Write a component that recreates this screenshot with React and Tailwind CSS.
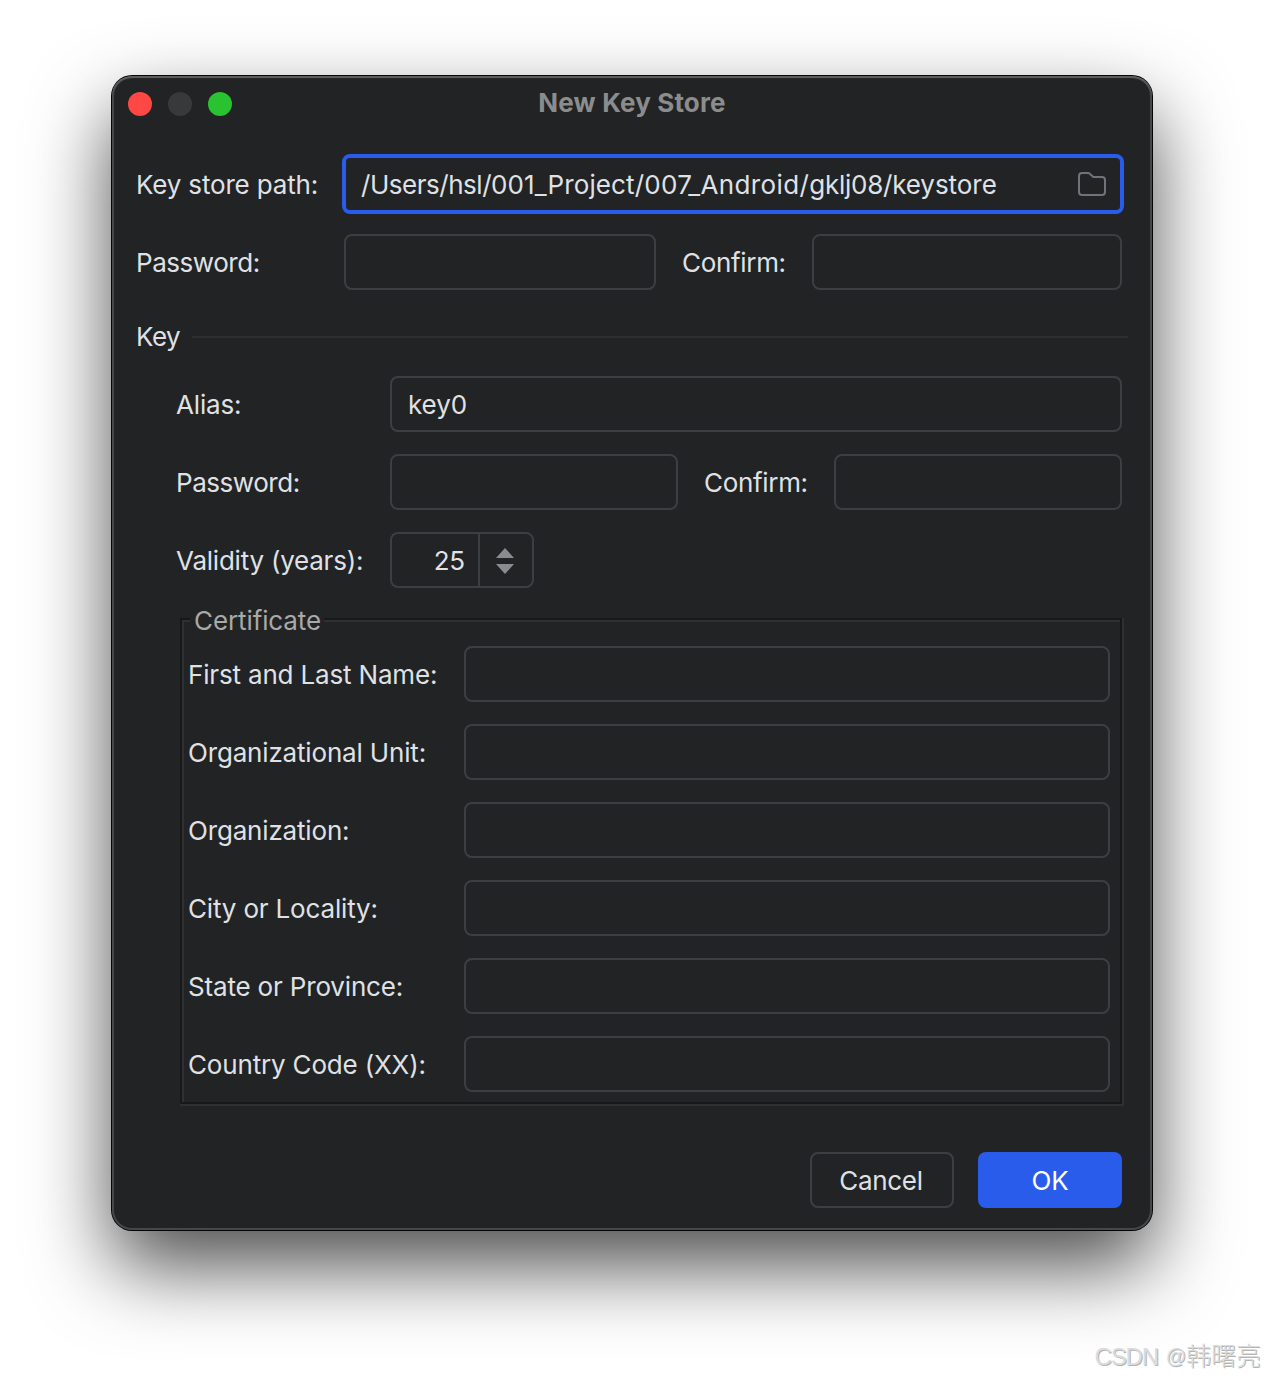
import React from "react";

const certificateFields = [
  "First and Last Name:",
  "Organizational Unit:",
  "Organization:",
  "City or Locality:",
  "State or Province:",
  "Country Code (XX):",
];

function Field({ className = "", children }) {
  return (
    <div
      className={
        "flex h-14 items-center rounded-lg border-2 border-[#3d3e44] px-4 " + className
      }
    >
      {children}
    </div>
  );
}

function FolderIcon() {
  return (
    <svg width="28" height="24" viewBox="0 0 28 24" fill="none" stroke="#6f737a" strokeWidth="2">
      <path d="M1 4a3 3 0 0 1 3-3h6.2a2 2 0 0 1 1.3.5L15.3 5H24a3 3 0 0 1 3 3v12a3 3 0 0 1-3 3H4a3 3 0 0 1-3-3z" />
    </svg>
  );
}

function TitleBar() {
  return (
    <div className="grid h-14 grid-cols-[1fr_auto_1fr] items-center px-4">
      <div className="flex gap-4">
        <span className="size-6 rounded-full bg-[#ff4744]" />
        <span className="size-6 rounded-full bg-[#38393a]" />
        <span className="size-6 rounded-full bg-[#29c231]" />
      </div>
      <div className="pb-0.5 text-[26px] font-bold tracking-[0.15px] text-[#8b8c8d]">
        New Key Store
      </div>
      <div />
    </div>
  );
}

function CertificateGroup() {
  return (
    <div className="relative ml-11 mr-[-2px] mt-[30px] h-[488px] p-0.5 shadow-[inset_-2px_0_#2f3032,inset_0_-2px_#2f3032,inset_2px_2px_#17181a]">
      <div className="flex h-full flex-col gap-[22px] pl-1.5 pr-3 pt-[26px] shadow-[inset_-2px_0_#17181a,inset_0_-2px_#17181a,inset_2px_2px_#2f3032]">
        {certificateFields.map((label) => (
          <div key={label} className="grid grid-cols-[276px_1fr] items-center">
            <span className="pt-0.5">{label}</span>
            <Field />
          </div>
        ))}
      </div>
      <div className="absolute left-2.5 top-[-13px] w-[134px] bg-[#222325] pl-1 leading-8 tracking-[-0.1px] text-[#a9a9a7]">
        Certificate
      </div>
    </div>
  );
}

export default function App() {
  return (
    <div className="relative h-[1378px] w-[1264px] overflow-hidden bg-white px-28 pt-19 font-['Inter',sans-serif] text-[26px] leading-8 font-[430] tracking-[-0.17px] text-[#dfe1e5]">
      <div className="h-[1154px] w-[1040px] rounded-[20px] bg-[#222325] shadow-[0_0_0_1px_#050505,inset_0_2px_1px_#5d5e5f,inset_0_0_0_2px_#464749,0_36px_80px_rgba(0,0,0,0.7)]">
        <TitleBar />
        <div className="px-6 pr-[30px] pt-[22px]">
          <div className="mr-[-2px] flex items-center">
            <span className="w-[206px] shrink-0 whitespace-nowrap pt-0.5">Key store path:</span>
            <div className="flex h-[60px] flex-1 items-center justify-between rounded-lg border-4 border-[#2a5cec] pl-[15px] pr-3.5">
              <span className="whitespace-nowrap pt-0.5">
                <span className="tracking-[-0.47px]">/Users/hsl/</span>
                <span className="tracking-[0.1px]">001_Project/</span>
                <span className="tracking-[0.38px]">007_Android/</span>
                <span className="tracking-[-0.25px]">gklj08/</span>
                <span className="tracking-[-0.05px]">keystore</span>
              </span>
              <FolderIcon />
            </div>
          </div>

          <div className="mt-5 grid grid-cols-[208px_312px_156px_310px] items-center">
            <span className="pt-0.5 tracking-[-0.45px]">Password:</span>
            <Field />
            <span className="pl-[26px] pt-0.5 tracking-[-0.32px]">Confirm:</span>
            <Field />
          </div>

          <div className="-mr-1.5 mt-[30px] flex h-[34px] items-center gap-3">
            <span className="w-11 tracking-[-0.5px]">Key</span>
            <div className="h-0.5 flex-1 bg-[#2d2e30]" />
          </div>

          <div className="mt-[22px] flex flex-col gap-[22px] pl-10">
            <div className="grid grid-cols-[214px_732px] items-center">
              <span className="pt-0.5">Alias:</span>
              <Field>
                <span className="pt-0.5 tracking-[-0.1px]">key0</span>
              </Field>
            </div>
            <div className="grid grid-cols-[214px_288px_156px_288px] items-center">
              <span className="pt-0.5 tracking-[-0.45px]">Password:</span>
              <Field />
              <span className="pl-[26px] pt-0.5 tracking-[-0.32px]">Confirm:</span>
              <Field />
            </div>
            <div className="grid grid-cols-[214px_144px] items-center">
              <span className="pt-0.5 tracking-[-0.23px]">Validity (years):</span>
              <div className="flex h-14 rounded-lg border-2 border-[#3d3e44]">
                <div className="flex w-[88px] items-center justify-end border-r-2 border-[#3d3e44] pr-[13px] pt-0.5">
                  25
                </div>
                <div className="flex flex-1 items-center justify-center pr-0.5 pt-0.5">
                  <svg width="18" height="26" viewBox="0 0 18 26" fill="#8a8b8f">
                    <path d="M9 0l9 10H0zM9 26l9-10H0z" />
                  </svg>
                </div>
              </div>
            </div>
          </div>

          <CertificateGroup />

          <div className="mt-[46px] flex justify-end gap-6">
            <button className="h-14 w-36 rounded-lg border-2 border-[#3d3e44] pr-0.5 pt-0.5 tracking-[-0.3px]">
              Cancel
            </button>
            <button className="h-14 w-36 rounded-lg bg-[#2a5cec] pt-0.5 text-white">OK</button>
          </div>
        </div>
      </div>
      <div className="absolute bottom-[5px] right-[3px] whitespace-nowrap font-['Liberation_Sans','Noto_Sans_CJK_SC',sans-serif] text-2xl font-light tracking-normal text-[#dcdcdc] [text-shadow:1px_1px_0_#b4b4b4]">
        <span className="tracking-[-1.1px]">CSDN </span>
        <span className="relative bottom-0.5 ml-[2px] text-[20px]">@</span>
        <span className="text-[25px]">韩曙亮</span>
      </div>
    </div>
  );
}
